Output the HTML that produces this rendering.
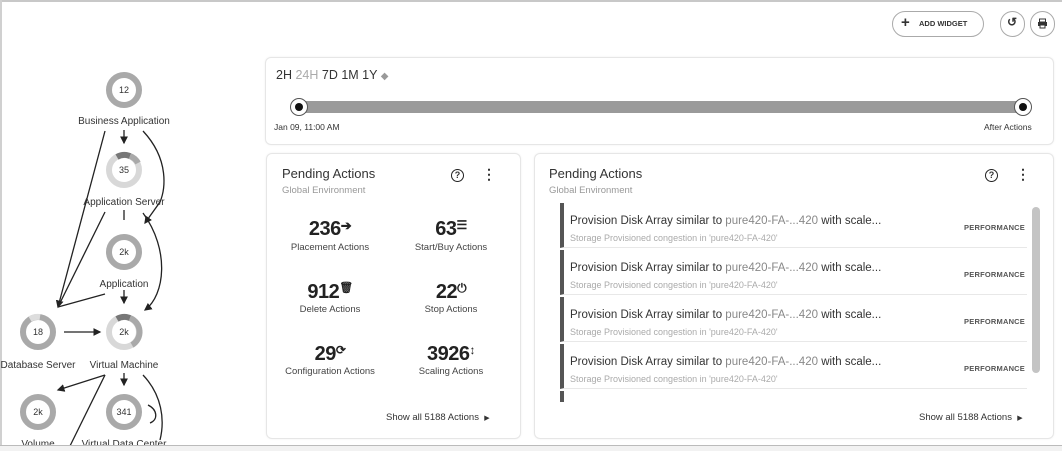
<!DOCTYPE html>
<html><head><meta charset="utf-8"><style>
*{box-sizing:border-box;margin:0;padding:0}
body{width:1062px;height:451px;overflow:hidden;background:#fff;font-family:"Liberation Sans",sans-serif;color:#333;position:relative}
.abs{position:absolute}
.card{position:absolute;background:#fff;border:1px solid #e6e6e6;border-radius:6px;box-shadow:0 0 2px rgba(0,0,0,.06)}
.t{position:absolute;white-space:nowrap}
.num{font-size:20px;font-weight:bold;color:#222;text-align:center;width:120px;margin-left:-60px;letter-spacing:-0.5px}
.alab{font-size:9.5px;color:#444;text-align:center;width:130px;margin-left:-65px}
.item{position:absolute;left:560px;width:467px;height:45px;border-left:4px solid #555;border-bottom:1px solid #e8e8e8;background:#fff}
.item .a{position:absolute;left:6px;top:12px;font-size:11.5px;color:#333;white-space:nowrap}
.item .a span{color:#888}
.item .b{position:absolute;left:6px;top:30px;font-size:9px;color:#aaa;white-space:nowrap}
.item .c{position:absolute;right:2px;top:20px;font-size:7.5px;font-weight:bold;color:#555;letter-spacing:.2px}
</style></head><body>
<div class="abs" style="left:0;top:0;width:1062px;height:2px;background:#c8c8c8"></div>
<div class="abs" style="left:0;top:0;width:2px;height:451px;background:#d0d0d0"></div>

<!-- graph -->
<svg class="abs" style="left:0;top:0" width="260" height="451">
<defs><marker id="ar" markerWidth="6" markerHeight="6" refX="5" refY="3" orient="auto"><path d="M0,0L6,3L0,6z" fill="#222"/></marker></defs>
<g stroke="#222" stroke-width="1.3" fill="none">
<path d="M124,130V143" marker-end="url(#ar)"/>
<path d="M124,290V303" marker-end="url(#ar)"/>
<path d="M124,373V385" marker-end="url(#ar)"/>
<path d="M124,210V220" />
<path d="M64,332H100" marker-end="url(#ar)"/>
<path d="M105,131L58,307" marker-end="url(#ar)"/>
<path d="M105,212L58,307"/>
<path d="M105,294L58,307"/>
<path d="M143,131C170,160 165,190 160,202L145,223" marker-end="url(#ar)"/>
<path d="M143,213C170,250 165,295 145,310" marker-end="url(#ar)"/>
<path d="M105,375L58,390" marker-end="url(#ar)"/>
<path d="M105,375L68,450"/>
<path d="M143,375C162,395 165,420 160,440"/>
<path d="M148,405C158,410 158,420 150,423"/>
</g>
<g fill="none" stroke-width="6">
<circle cx="124" cy="90" r="15" stroke="#a9a9a9"/>
<circle cx="124" cy="170" r="15" stroke="#d8d8d8"/>
<path d="M117,157A15,15 0 0 1 130,156" stroke="#777"/><path d="M130,156A15,15 0 0 1 138,163" stroke="#a9a9a9"/>
<circle cx="124" cy="252" r="15" stroke="#a9a9a9"/>
<circle cx="38" cy="332" r="15" stroke="#a9a9a9"/>
<path d="M30,319A15,15 0 0 1 40,317" stroke="#ddd"/>
<circle cx="124" cy="332" r="15" stroke="#d8d8d8"/>
<path d="M117,319A15,15 0 0 1 130,318" stroke="#777"/><path d="M130,318A15,15 0 0 1 132,345" stroke="#a9a9a9"/>
<circle cx="38" cy="412" r="15" stroke="#a9a9a9"/>
<circle cx="124" cy="412" r="15" stroke="#a9a9a9"/>
</g>
<g font-family="Liberation Sans" font-size="9" fill="#333" text-anchor="middle">
<text x="124" y="93">12</text><text x="124" y="173">35</text><text x="124" y="255">2k</text>
<text x="38" y="335">18</text><text x="124" y="335">2k</text><text x="38" y="415">2k</text><text x="124" y="415">341</text>
</g>
<g font-family="Liberation Sans" font-size="10" fill="#333" text-anchor="middle">
<text x="124" y="124">Business Application</text><text x="124" y="205">Application Server</text>
<text x="124" y="287">Application</text><text x="38" y="368">Database Server</text>
<text x="124" y="368">Virtual Machine</text><text x="38" y="447">Volume</text><text x="124" y="447">Virtual Data Center</text>
</g>
</svg>
<div class="abs" style="left:0;top:445px;width:1062px;height:6px;background:#f2f2f2;border-top:1px solid #bbb"></div>

<!-- top buttons -->
<div class="abs" style="left:892px;top:11px;width:92px;height:26px;border:1px solid #aaa;border-radius:13px"></div>
<div class="t" style="left:901px;top:14px;font-size:15px;font-weight:bold">+</div>
<div class="t" style="left:919px;top:19px;font-size:7.5px;font-weight:bold;color:#333">ADD WIDGET</div>
<div class="abs" style="left:1000px;top:11px;width:25px;height:26px;border:1px solid #aaa;border-radius:13px"></div>
<div class="t" style="left:1007px;top:15px;font-size:12px;font-weight:bold">↺</div>
<div class="abs" style="left:1030px;top:11px;width:25px;height:26px;border:1px solid #aaa;border-radius:13px"></div>
<svg class="abs" style="left:1037px;top:18px" width="11" height="11"><rect x="2.5" y="1" width="6" height="3" fill="none" stroke="#333"/><rect x="1" y="4" width="9" height="4" fill="#333"/><rect x="3" y="7" width="5" height="3" fill="#fff" stroke="#333"/></svg>

<!-- timeline card -->
<div class="card" style="left:265px;top:57px;width:789px;height:88px"></div>
<div class="t" style="left:276px;top:68px;font-size:12.5px;color:#333">2H <span style="color:#aaa">24H</span> 7D 1M 1Y <span style="color:#999;font-size:10px">◆</span></div>
<div class="abs" style="left:299px;top:101px;width:724px;height:12px;background:#9a9a9a"></div>
<div class="abs" style="left:290px;top:98px;width:18px;height:18px;border-radius:50%;background:#fff;border:1.5px solid #555"></div>
<div class="abs" style="left:295px;top:103px;width:8px;height:8px;border-radius:50%;background:#111"></div>
<div class="abs" style="left:1014px;top:98px;width:18px;height:18px;border-radius:50%;background:#fff;border:1.5px solid #555"></div>
<div class="abs" style="left:1019px;top:103px;width:8px;height:8px;border-radius:50%;background:#111"></div>
<div class="t" style="left:274px;top:122px;font-size:8.5px;color:#333">Jan 09, 11:00 AM</div>
<div class="t" style="left:984px;top:122px;font-size:8.5px;color:#333">After Actions</div>

<!-- card 1 -->
<div class="card" style="left:266px;top:153px;width:255px;height:286px"></div>
<div class="t" style="left:282px;top:166px;font-size:13px;color:#333">Pending Actions</div>
<div class="t" style="left:282px;top:185px;font-size:9.5px;color:#999">Global Environment</div>
<div class="abs" style="left:451px;top:169px;width:13px;height:13px;border:1.5px solid #222;border-radius:50%;font-size:9px;font-weight:bold;text-align:center;line-height:10px">?</div>
<div class="t" style="left:482px;top:166px;font-size:14px;font-weight:bold">⋮</div>

<div class="t num" style="left:330px;top:218px">236<span style="font-size:13px;vertical-align:top">➔</span></div>
<div class="t alab" style="left:330px;top:242px">Placement Actions</div>
<div class="t num" style="left:451px;top:218px">63<span style="font-size:12px;vertical-align:top">☰</span></div>
<div class="t alab" style="left:451px;top:242px">Start/Buy Actions</div>
<div class="t num" style="left:330px;top:281px">912<span style="font-size:11px;vertical-align:top">🗑</span></div>
<div class="t alab" style="left:330px;top:304px">Delete Actions</div>
<div class="t num" style="left:451px;top:281px">22<span style="font-size:12px;vertical-align:top">⏻</span></div>
<div class="t alab" style="left:451px;top:304px">Stop Actions</div>
<div class="t num" style="left:330px;top:343px">29<span style="font-size:12px;vertical-align:top">⟳</span></div>
<div class="t alab" style="left:330px;top:366px">Configuration Actions</div>
<div class="t num" style="left:451px;top:343px">3926<span style="font-size:12px;vertical-align:top">↕</span></div>
<div class="t alab" style="left:451px;top:366px">Scaling Actions</div>
<div class="t" style="left:386px;top:412px;font-size:9.5px;color:#333">Show all 5188 Actions &nbsp;<span style="font-size:7px">▶</span></div>

<!-- card 2 -->
<div class="card" style="left:534px;top:153px;width:520px;height:286px"></div>
<div class="t" style="left:549px;top:166px;font-size:13px;color:#333">Pending Actions</div>
<div class="t" style="left:549px;top:185px;font-size:9.5px;color:#999">Global Environment</div>
<div class="abs" style="left:985px;top:169px;width:13px;height:13px;border:1.5px solid #222;border-radius:50%;font-size:9px;font-weight:bold;text-align:center;line-height:10px">?</div>
<div class="t" style="left:1016px;top:166px;font-size:14px;font-weight:bold">⋮</div>
<div class="abs" style="left:556px;top:203px;width:489px;height:199px;overflow:hidden">
<div class="item" style="left:4px;top:0"><div class="a">Provision Disk Array similar to <span>pure420-FA-...420</span> with scale...</div><div class="b">Storage Provisioned congestion in 'pure420-FA-420'</div><div class="c">PERFORMANCE</div></div>
<div class="item" style="left:4px;top:47px"><div class="a">Provision Disk Array similar to <span>pure420-FA-...420</span> with scale...</div><div class="b">Storage Provisioned congestion in 'pure420-FA-420'</div><div class="c">PERFORMANCE</div></div>
<div class="item" style="left:4px;top:94px"><div class="a">Provision Disk Array similar to <span>pure420-FA-...420</span> with scale...</div><div class="b">Storage Provisioned congestion in 'pure420-FA-420'</div><div class="c">PERFORMANCE</div></div>
<div class="item" style="left:4px;top:141px"><div class="a">Provision Disk Array similar to <span>pure420-FA-...420</span> with scale...</div><div class="b">Storage Provisioned congestion in 'pure420-FA-420'</div><div class="c">PERFORMANCE</div></div>
<div class="item" style="left:4px;top:188px"><div class="a">Provision Disk Array similar to <span>pure420-FA-...420</span> with scale...</div></div>
<div class="abs" style="left:476px;top:4px;width:8px;height:166px;background:#c4c4c4;border-radius:4px"></div>
</div>
<div class="t" style="left:919px;top:412px;font-size:9.5px;color:#333">Show all 5188 Actions &nbsp;<span style="font-size:7px">▶</span></div>
</body></html>
